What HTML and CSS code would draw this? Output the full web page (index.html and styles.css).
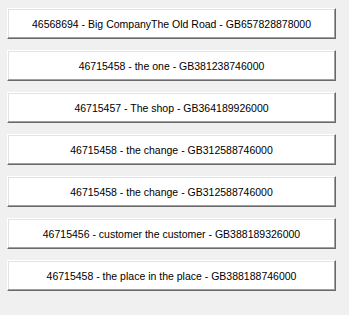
FILE: index.html
```html
<!DOCTYPE html>
<html lang="en">
<head>
  <meta charset="UTF-8" />
  <title>Customer Picker</title>
  <link rel="stylesheet" href="styles.css">
</head>
<body>
  <div class="list">
    <button class="pick">46568694 - Big CompanyThe Old Road - GB657828878000</button>
    <button class="pick">46715458 - the one - GB381238746000</button>
    <button class="pick">46715457 - The shop - GB364189926000</button>
    <button class="pick">46715458 - the change - GB312588746000</button>
    <button class="pick">46715458 - the change - GB312588746000</button>
    <button class="pick">46715456 - customer the customer - GB388189326000</button>
    <button class="pick">46715458 - the place in the place - GB388188746000</button>
  </div>
</body>
</html>
```

FILE: styles.css
```css
body {
  margin: 0;
  background: #f0f0f0;
  font-family: 'Liberation Sans', Arial, sans-serif;
}
.list {
  display: flex;
  flex-direction: column;
  gap: 11px;
  padding: 8px 13px 0 7px;
}
.pick {
  height: 31px;
  padding: 0;
  background: #fff;
  border: 1px solid;
  border-color: #fff #696969 #696969 #fff;
  box-shadow: inset -1px -1px 0 #a0a0a0, inset 1px 1px 0 #e3e3e3;
  font-family: inherit;
  font-size: 10.5px;
  color: #000;
  text-align: center;
}
```
